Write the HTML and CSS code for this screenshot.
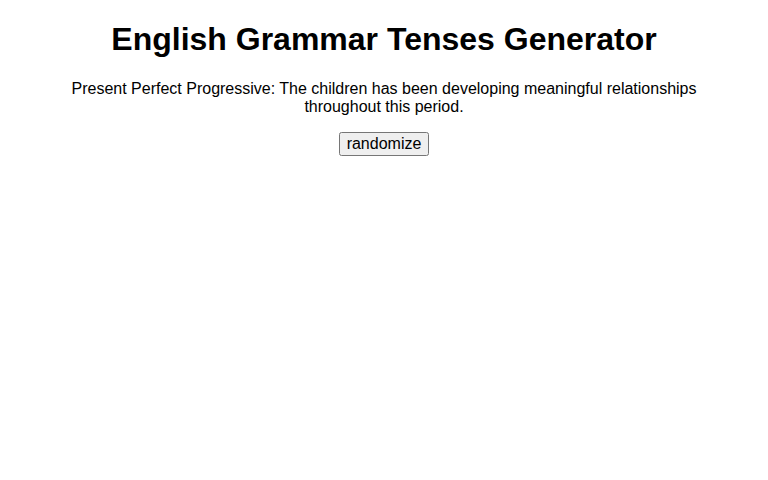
FILE: index.html
```html
<!DOCTYPE html>
<html lang="en">
<head>
    <meta charset="UTF-8">
    <meta name="viewport" content="width=device-width, initial-scale=1.0">
    <title>English Grammar Tenses Generator</title>
    <link rel="stylesheet" href="styles.css">
</head>
<body>
    <div class="app">
        <h1 class="title">English Grammar Tenses Generator</h1>
        <p class="sentence" id="sentence">Present Perfect Progressive: The children has been developing meaningful relationships throughout this period.</p>
        <button class="randomize-btn" id="randomize">randomize</button>
    </div>
</body>
</html>
```

FILE: styles.css
```css
body {
    font-family: 'Liberation Sans', Arial, sans-serif;
    margin: 0;
    color: #000;
    background: #fff;
}
.app {
    text-align: center;
    padding: 21px 8px 8px;
}
.title {
    font-size: 32px;
    margin: 0 0 22px;
}
.sentence {
    font-size: 16px;
    max-width: 680px;
    margin: 0 auto 16px;
}
.randomize-btn {
    font-family: 'Liberation Sans', Arial, sans-serif;
    font-size: 16px;
    padding: 1px 6px;
}
```
